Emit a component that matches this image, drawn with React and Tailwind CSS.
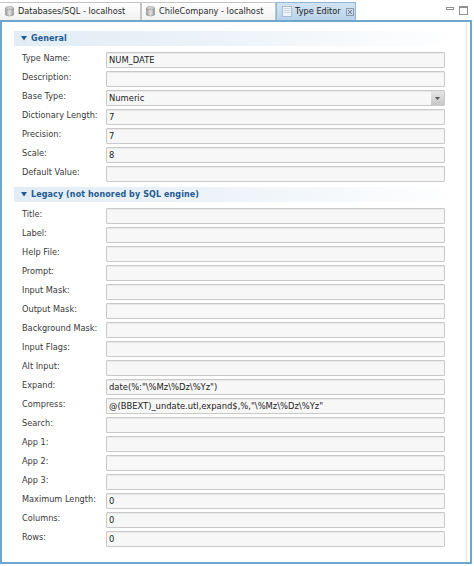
import React from "react";

const FONT = { fontFamily: '"DejaVu Sans", Verdana, sans-serif' };

function DbIcon() {
  return (
    <svg width="9" height="11" viewBox="0 0 9 11" className="shrink-0">
      <defs>
        <linearGradient id="dbg" x1="0" x2="1">
          <stop offset="0" stopColor="#9a9a9a" />
          <stop offset="0.5" stopColor="#e2e2e2" />
          <stop offset="1" stopColor="#9a9a9a" />
        </linearGradient>
      </defs>
      <path d="M0.5 2 L0.5 9 Q4.5 11 8.5 9 L8.5 2 Z" fill="url(#dbg)" stroke="#8a8a8a" strokeWidth="0.6" />
      <ellipse cx="4.5" cy="2" rx="4" ry="1.4" fill="#d8d8d8" stroke="#8a8a8a" strokeWidth="0.6" />
    </svg>
  );
}

function DocIcon() {
  return (
    <svg width="10" height="11" viewBox="0 0 10 11" className="shrink-0">
      <rect x="0.5" y="0.5" width="9" height="10" fill="#eef3f8" stroke="#a9bccd" />
      <rect x="2" y="2" width="6" height="1" fill="#c9d6e2" />
      <rect x="2" y="4" width="6" height="1" fill="#c9d6e2" />
      <rect x="2" y="6" width="6" height="1" fill="#c9d6e2" />
    </svg>
  );
}

function Tab({ label, first }) {
  return (
    <div
      className={`flex items-center gap-[4px] h-[18px] mt-[2px] shrink-0 whitespace-nowrap border-t border-r border-[#c4c4c4] bg-gradient-to-b from-[#ffffff] to-[#f1f1f1] text-[8.2px] text-[#2a2a2a] ${first ? "pl-[5px] w-[141px]" : "pl-[4px] border-l w-[135px]"}`}
    >
      <DbIcon />
      <span>{label}</span>
    </div>
  );
}

function Header({ title }) {
  return (
    <div className="flex items-center h-[15px] w-[444px] bg-gradient-to-r from-[#e1ecf5] via-[#eef4f9] to-[#ffffff] pl-[7px] gap-[4px]">
      <svg width="6" height="5" viewBox="0 0 6 5">
        <path d="M0 0 L6 0 L3 4.5 Z" fill="#1f5b91" />
      </svg>
      <span className="text-[8px] font-bold text-[#1f5b91] tracking-[0.1px] whitespace-nowrap">{title}</span>
    </div>
  );
}

function Row({ label, value, select }) {
  return (
    <div className="flex items-center h-[16px]">
      <div className="w-[92px] shrink-0 pl-[8px] text-[8.2px] text-[#3a3a3a] -mt-[3px] whitespace-nowrap">{label}</div>
      <div className="relative flex items-center w-[339px] shrink-0 h-[16px] border border-[#c9c9c9] rounded-[1px] bg-[#f7f7f7] pl-[2px] text-[8.4px] text-[#222222] whitespace-nowrap shadow-[inset_0_1px_1px_rgba(0,0,0,0.06)]">
        <span>{value}</span>
        {select && (
          <div className="absolute right-0 top-0 h-[14px] w-[13px] bg-gradient-to-b from-[#e6e6e6] to-[#c8c8c8] flex items-center justify-center">
            <svg width="5" height="3" viewBox="0 0 5 3">
              <path d="M0 0 L5 0 L2.5 3 Z" fill="#555" />
            </svg>
          </div>
        )}
      </div>
    </div>
  );
}

const general = [
  ["Type Name:", "NUM_DATE"],
  ["Description:", ""],
  ["Base Type:", "Numeric", true],
  ["Dictionary Length:", "7"],
  ["Precision:", "7"],
  ["Scale:", "8"],
  ["Default Value:", ""],
];

const legacy = [
  ["Title:", ""],
  ["Label:", ""],
  ["Help File:", ""],
  ["Prompt:", ""],
  ["Input Mask:", ""],
  ["Output Mask:", ""],
  ["Background Mask:", ""],
  ["Input Flags:", ""],
  ["Alt Input:", ""],
  ["Expand:", 'date(%:"\\%Mz\\%Dz\\%Yz")'],
  ["Compress:", '@(BBEXT)_undate.utl,expand$,%,"\\%Mz\\%Dz\\%Yz"'],
  ["Search:", ""],
  ["App 1:", ""],
  ["App 2:", ""],
  ["App 3:", ""],
  ["Maximum Length:", "0"],
  ["Columns:", "0"],
  ["Rows:", "0"],
];

export default function App() {
  return (
    <div className="w-[474px] h-[566px] bg-white flex flex-col overflow-hidden" style={FONT}>
      <div className="flex h-[20px] shrink-0 bg-white">
        <Tab label="Databases/SQL - localhost" first />
        <Tab label="ChileCompany - localhost" />
        <div className="w-[80px] shrink-0 whitespace-nowrap flex items-center gap-[3px] h-[18px] mt-[2px] pl-[5px] bg-gradient-to-b from-[#d3e4f2] to-[#b9d3ea] border-t border-l border-r border-[#8db6d6] text-[8.2px] text-[#1b1b1b]">
          <DocIcon />
          <span>Type Editor</span>
          <svg width="8" height="8" viewBox="0 0 8 8" className="ml-[2px] shrink-0">
            <rect x="0.5" y="0.5" width="7" height="7" fill="none" stroke="#8c99a5" />
            <path d="M2 2 L6 6 M6 2 L2 6" stroke="#6f7c88" strokeWidth="1" />
          </svg>
        </div>
        <div className="flex-1 flex justify-end items-start pt-[6px] pr-[6px] gap-[5px]">
          <svg width="8" height="6" viewBox="0 0 8 6">
            <rect x="0.5" y="1.5" width="7" height="2" fill="#fff" stroke="#8f8f8f" />
          </svg>
          <svg width="9" height="9" viewBox="0 0 9 9">
            <rect x="0.5" y="0.5" width="8" height="8" fill="#fff" stroke="#8f8f8f" />
            <rect x="0.5" y="0.5" width="8" height="1.5" fill="#8f8f8f" />
          </svg>
        </div>
      </div>
      <div className="flex-1 border-2 border-[#6ea6ce] mr-[2px] mb-[2px] pl-[12px] pt-[9px] relative">
        <div className="absolute right-[3px] top-0 bottom-0 w-px bg-[#e6e6e6]" />
        <Header title="General" />
        <div className="flex flex-col gap-[3px] mt-[6px]">
          {general.map(([l, v, s]) => (
            <Row key={l} label={l} value={v} select={s} />
          ))}
        </div>
        <div className="mt-[5px]">
          <Header title="Legacy (not honored by SQL engine)" />
        </div>
        <div className="flex flex-col gap-[3px] mt-[6px]">
          {legacy.map(([l, v]) => (
            <Row key={l} label={l} value={v} />
          ))}
        </div>
      </div>
    </div>
  );
}
